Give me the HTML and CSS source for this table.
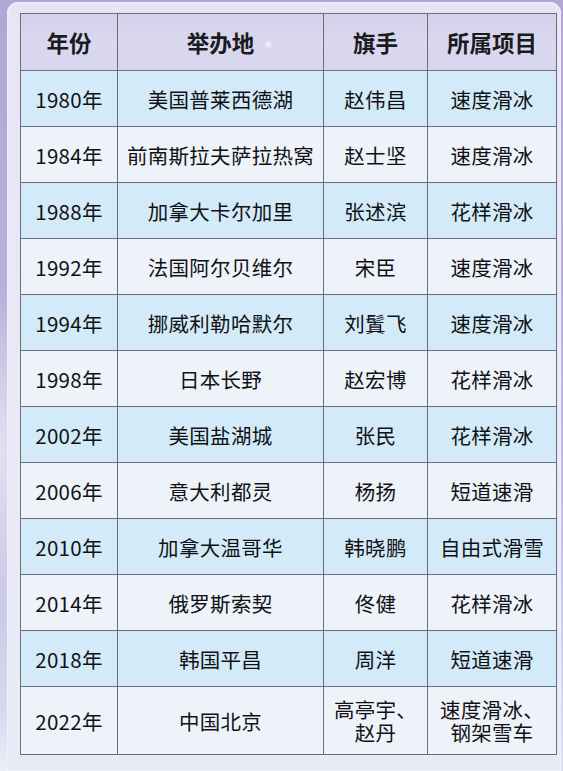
FILE: index.html
```html
<!DOCTYPE html>
<html lang="zh">
<head>
<meta charset="utf-8">
<link rel="stylesheet" href="styles.css">
</head>
<body>
<div class="scene">
  <div class="panel">
    <table class="olympic">
      <colgroup>
        <col class="c1"><col class="c2"><col class="c3"><col class="c4">
      </colgroup>
      <thead>
        <tr><th>年份</th><th>举办地</th><th>旗手</th><th>所属项目</th></tr>
      </thead>
      <tbody>
        <tr class="blue"><td>1980年</td><td>美国普莱西德湖</td><td>赵伟昌</td><td>速度滑冰</td></tr>
        <tr class="white"><td>1984年</td><td>前南斯拉夫萨拉热窝</td><td>赵士坚</td><td>速度滑冰</td></tr>
        <tr class="blue"><td>1988年</td><td>加拿大卡尔加里</td><td>张述滨</td><td>花样滑冰</td></tr>
        <tr class="white"><td>1992年</td><td>法国阿尔贝维尔</td><td>宋臣</td><td>速度滑冰</td></tr>
        <tr class="blue"><td>1994年</td><td>挪威利勒哈默尔</td><td>刘鬒飞</td><td>速度滑冰</td></tr>
        <tr class="white"><td>1998年</td><td>日本长野</td><td>赵宏博</td><td>花样滑冰</td></tr>
        <tr class="blue"><td>2002年</td><td>美国盐湖城</td><td>张民</td><td>花样滑冰</td></tr>
        <tr class="white"><td>2006年</td><td>意大利都灵</td><td>杨扬</td><td>短道速滑</td></tr>
        <tr class="blue"><td>2010年</td><td>加拿大温哥华</td><td>韩晓鹏</td><td>自由式滑雪</td></tr>
        <tr class="white"><td>2014年</td><td>俄罗斯索契</td><td>佟健</td><td>花样滑冰</td></tr>
        <tr class="blue"><td>2018年</td><td>韩国平昌</td><td>周洋</td><td>短道速滑</td></tr>
        <tr class="white last"><td>2022年</td><td>中国北京</td><td><span class="line">高亭宇、</span><span class="line">赵丹</span></td><td><span class="line">速度滑冰、</span><span class="line">钢架雪车</span></td></tr>
      </tbody>
    </table>
  </div>
</div>
</body>
</html>
```

FILE: styles.css
```css
html, body {
  margin: 0;
  padding: 0;
}
body {
  width: 563px;
  height: 771px;
  overflow: hidden;
  font-family: "Noto Sans CJK SC", "Noto Sans", sans-serif;
  color: #111114;
}
.scene {
  width: 563px;
  height: 771px;
  box-sizing: border-box;
  padding: 2px 2px 0 7px;
  background:
    radial-gradient(ellipse 30px 200px at 2px 450px, rgba(255,255,255,0.55), rgba(255,255,255,0) 80%),
    radial-gradient(ellipse 120px 60px at 0 771px, rgba(235,240,250,0.9), rgba(235,240,250,0) 90%),
    linear-gradient(180deg, #b1a6d5 0%, #bab1db 40%, #c8c6e6 75%, #dde2f2 100%);
}
.panel {
  height: 100%;
  box-sizing: border-box;
  border-radius: 11px 11px 0 0;
  padding: 11px 5px 0 13px;
  background: linear-gradient(180deg, #e7e5f4 0%, #eae9f6 50%, #e8ebf6 100%);
  box-shadow: inset 0 0 3px rgba(255,255,255,0.9);
}
.olympic {
  width: 536px;
  border-collapse: collapse;
  table-layout: fixed;
  border: 1.5px solid #6c6d7c;
}
.c1 { width: 97px; }
.c2 { width: 206px; }
.c3 { width: 104px; }
.c4 { width: 129px; }
.olympic th,
.olympic td {
  border: 1.5px solid #6c6d7c;
  text-align: center;
  vertical-align: middle;
  padding: 0;
  white-space: nowrap;
}
.olympic th {
  height: 56px;
  font-size: 22.5px;
  font-weight: 700;
  color: #1a1a1f;
  background:
    radial-gradient(circle 4px at 150px 30px, rgba(255,255,255,0.9), rgba(255,255,255,0)),
    linear-gradient(180deg, #d4d0ea 0%, #dad8ef 55%, #d7d6ee 100%);
}
.olympic td {
  height: 55px;
  font-size: 20.5px;
  font-weight: 400;
  line-height: 24px;
  letter-spacing: 0.3px;
}
.olympic td .line {
  display: block;
  line-height: 23px;
}
.olympic tr.blue td {
  background: #d3ebf8;
}
.olympic tr.white td {
  background: #eef3fa;
}
.olympic tr.last td {
  height: 67px;
}
```
